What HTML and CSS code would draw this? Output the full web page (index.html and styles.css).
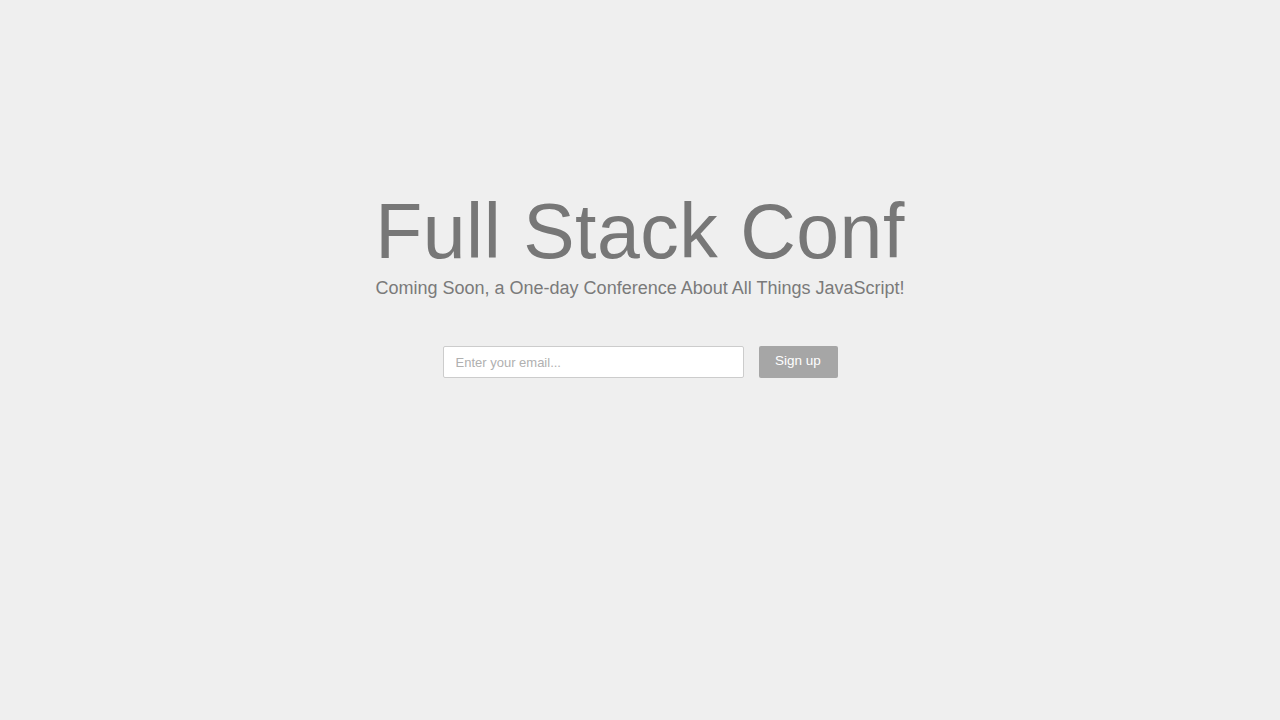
FILE: index.html
```html
<!DOCTYPE html>
<html>
<head>
<meta charset="utf-8">
<link rel="stylesheet" href="styles.css">
</head>
<body>
<main class="page">
  <header class="hero">
    <h1 class="title">Full Stack Conf</h1>
    <p class="tagline">Coming Soon, a One-day Conference About All Things JavaScript!</p>
  </header>
  <form class="signup">
    <input class="email" type="email" placeholder="Enter your email...">
    <button class="btn" type="button">Sign up</button>
  </form>
</main>
</body>
</html>
```

FILE: styles.css
```css
html, body {
  margin: 0;
  padding: 0;
  background: #efefef;
  height: 100%;
}
body {
  font-family: "Liberation Sans", Arial, sans-serif;
  color: #777777;
}
.page {
  height: 720px;
  display: flex;
  flex-direction: column;
  align-items: center;
  padding-top: 186px;
  box-sizing: border-box;
}
.hero {
  text-align: center;
}
.title {
  margin: 0;
  font-size: 77px;
  font-weight: normal;
  line-height: 90px;
  letter-spacing: 0.5px;
  color: #777777;
}
.tagline {
  margin: 0;
  font-size: 18px;
  line-height: 24px;
  color: #7a7a7a;
}
.signup {
  display: flex;
  gap: 15px;
  margin-top: 46px;
}
.email {
  width: 301px;
  height: 32px;
  box-sizing: border-box;
  border: 1px solid #cccccc;
  border-radius: 2px;
  background: #ffffff;
  padding: 0 12px;
  font-family: "Liberation Sans", Arial, sans-serif;
  font-size: 13px;
  color: #555;
  outline: none;
}
.email::placeholder {
  color: #b0b0b0;
}
.btn {
  width: 79px;
  height: 32px;
  box-sizing: border-box;
  border: none;
  border-radius: 2px;
  background: #a6a6a6;
  color: #ffffff;
  font-family: "Liberation Sans", Arial, sans-serif;
  font-size: 13.5px;
  padding: 0 0 3px;
}
```
